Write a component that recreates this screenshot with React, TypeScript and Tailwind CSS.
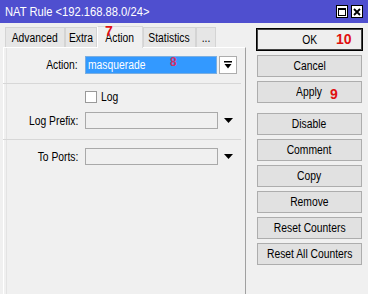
import React from "react";

const F = { fontFamily: "'Liberation Sans', Arial, sans-serif" };

function N({ children, o = "origin-center" }: { children: React.ReactNode; o?: string }) {
  return <span className={`inline-block whitespace-nowrap scale-x-[0.86] ${o}`}>{children}</span>;
}

function Btn({ children, extra = "" }: { children: React.ReactNode; extra?: string }) {
  return (
    <div
      className={`h-[22px] w-full flex items-center justify-center bg-[#e1e1e1] border border-[#adadad] text-[12px] text-black ${extra}`}
    >
      <N>{children}</N>
    </div>
  );
}

function Tab({ label, w, active = false }: { label: string; w: string; active?: boolean }) {
  return (
    <div
      className={`${w} flex items-center justify-center text-[12px] text-black border border-b-0 ${
        active
          ? "h-[22px] bg-[#f0f0f0] border-[#d9d9d9] border-l-white z-10 -mb-px"
          : "h-[20px] bg-[#e6e6e6] border-[#d4d4d4]"
      }`}
    >
      <N>{label}</N>
    </div>
  );
}

function Tri() {
  return (
    <svg width="9" height="5" viewBox="0 0 9 5" className="ml-[6px]">
      <polygon points="0,0 9,0 4.5,5" fill="#000" />
    </svg>
  );
}

export default function App() {
  return (
    <div className="w-[368px] h-[294px] bg-[#f0f0f0] flex flex-col overflow-hidden relative" style={F}>
      {/* title bar */}
      <div className="h-[23px] bg-[#4f4fcf] flex items-center justify-between pl-[5px] pr-[5px]">
        <span className="text-white text-[13px] leading-none">
          <N o="origin-left">NAT Rule &lt;192.168.88.0/24&gt;</N>
        </span>
        <div className="flex gap-[3px] items-center">
          <div className="w-[12px] h-[13px] bg-white border border-black flex items-center justify-center">
            <div className="w-[8px] h-[8px] border border-black border-t-2" />
          </div>
          <div className="w-[12px] h-[13px] bg-white border border-black flex items-center justify-center">
            <svg width="8" height="8" viewBox="0 0 8 8">
              <path d="M1 1 L7 7 M7 1 L1 7" stroke="#000" strokeWidth="1.8" />
            </svg>
          </div>
        </div>
      </div>

      <div className="flex flex-1">
        {/* left */}
        <div className="w-[250px] flex flex-col">
          <div className="h-[24px] flex items-end pl-[5px]">
            <Tab label="Advanced" w="w-[60px]" />
            <Tab label="Extra" w="w-[32px]" />
            <Tab label="Action" w="w-[46px]" active />
            <Tab label="Statistics" w="w-[53px]" />
            <Tab label="..." w="w-[20px]" />
          </div>
          <div className="ml-[3px] w-[243px] flex-1 border-l border-l-white border-t border-t-white border-r border-r-[#a0a0a0] flex">
            <div className="w-[3px] border-r border-r-[#e3e3e3]" />
            <div className="flex-1 flex flex-col pt-[8px] text-[12px] text-black">
              {/* Action row */}
              <div className="h-[18px] flex items-center">
                <div className="w-[71px] text-right">
                  <N o="origin-right">Action:</N>
                </div>
                <div className="ml-[7px] w-[132px] h-[18px] bg-[#3399ff] border border-[#7aaee0] text-white flex items-center pl-[2px]">
                  <N o="origin-left">masquerade</N>
                </div>
                <div className="ml-[2px] w-[18px] h-[18px] bg-white border border-[#adadad] flex items-center justify-center">
                  <svg width="8" height="8" viewBox="0 0 8 8">
                    <rect x="0" y="0" width="8" height="1.5" fill="#000" />
                    <polygon points="0.5,3 7.5,3 4,7.5" fill="#000" />
                  </svg>
                </div>
              </div>
              <div className="mt-[9px] h-px bg-[#d7d7d7] mr-[4px] -ml-[4px]" />
              {/* Log checkbox */}
              <div className="mt-[7px] h-[12px] flex items-center">
                <div className="ml-[78px] w-[12px] h-[12px] bg-white border border-[#999]" />
                <span className="ml-[4px]">
                  <N o="origin-left">Log</N>
                </span>
              </div>
              {/* Log Prefix */}
              <div className="mt-[9px] h-[17px] flex items-center">
                <div className="w-[71px] text-right">
                  <N o="origin-right">Log Prefix:</N>
                </div>
                <div className="ml-[7px] w-[133px] h-[17px] border border-[#a9a9a9] bg-[#f0f0f0]" />
                <Tri />
              </div>
              <div className="mt-[10px] h-px bg-[#d7d7d7] mr-[4px] -ml-[4px]" />
              {/* To Ports */}
              <div className="mt-[8px] h-[17px] flex items-center">
                <div className="w-[71px] text-right">
                  <N o="origin-right">To Ports:</N>
                </div>
                <div className="ml-[7px] w-[133px] h-[17px] border border-[#a9a9a9] bg-[#f0f0f0]" />
                <Tri />
              </div>
            </div>
          </div>
        </div>

        {/* right */}
        <div className="ml-[7px] w-[105px] flex flex-col pt-[5px] gap-[4px]">
          <div className="h-[23px] -mx-[1px] flex items-center justify-center bg-[#eeeeee] border border-black shadow-[inset_0_0_0_1px_#444] text-[12px] text-black">
            <N>OK</N>
          </div>
          <Btn>Cancel</Btn>
          <Btn>Apply</Btn>
          <Btn extra="mt-[6px]">Disable</Btn>
          <Btn>Comment</Btn>
          <Btn>Copy</Btn>
          <Btn>Remove</Btn>
          <Btn>Reset Counters</Btn>
          <Btn>Reset All Counters</Btn>
        </div>
      </div>

      {/* red annotations */}
      <span className="absolute z-20 left-[105px] top-[24px] text-[14px] font-bold text-[#e01010] leading-none">7</span>
      <span className="absolute z-20 left-[170px] top-[56px] text-[12px] font-bold text-[#d0306a] leading-none">8</span>
      <span className="absolute z-20 left-[330px] top-[87px] text-[14px] font-bold text-[#e01010] leading-none">9</span>
      <span className="absolute z-20 left-[336px] top-[32px] text-[14px] font-bold text-[#e01010] leading-none">10</span>
    </div>
  );
}
